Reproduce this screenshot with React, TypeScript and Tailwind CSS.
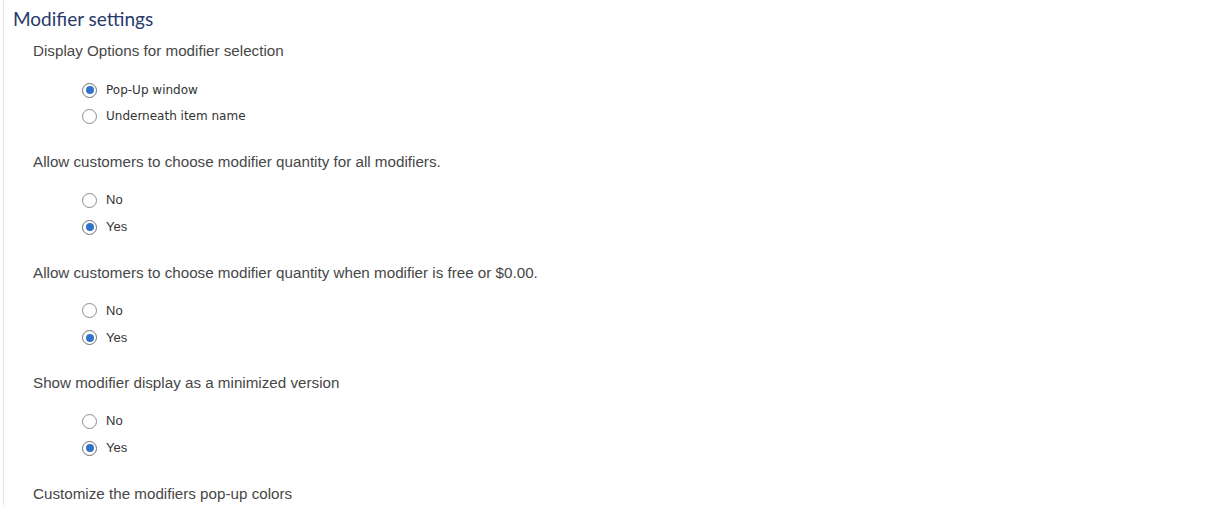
type Option = { label: string; checked: boolean };

type Setting = { title: string; options: Option[]; wide?: boolean };

const settings: Setting[] = [
  {
    title: "Display Options for modifier selection",
    wide: true,
    options: [
      { label: "Pop-Up window", checked: true },
      { label: "Underneath item name", checked: false },
    ],
  },
  {
    title: "Allow customers to choose modifier quantity for all modifiers.",
    options: [
      { label: "No", checked: false },
      { label: "Yes", checked: true },
    ],
  },
  {
    title: "Allow customers to choose modifier quantity when modifier is free or $0.00.",
    options: [
      { label: "No", checked: false },
      { label: "Yes", checked: true },
    ],
  },
  {
    title: "Show modifier display as a minimized version",
    options: [
      { label: "No", checked: false },
      { label: "Yes", checked: true },
    ],
  },
];

function Radio({ checked }: { checked: boolean }) {
  return (
    <span
      className={
        checked
          ? "w-[15px] h-[15px] rounded-full border border-[#6f6f6f] bg-white flex items-center justify-center shrink-0"
          : "w-[15px] h-[15px] rounded-full border border-[#8c8c8c] bg-white flex items-center justify-center shrink-0"
      }
    >
      {checked && <span className="w-[8px] h-[8px] rounded-full bg-[#2f74c9]" />}
    </span>
  );
}

export default function App() {
  return (
    <div className="w-[1227px] h-[505px] bg-white overflow-hidden">
      <div className="ml-[3px] h-full border-l border-[#e4e4e4] pl-[9px] pt-[7px]">
        <h1 className="text-[19px] leading-[24px] text-[#28396b] font-['Lato',sans-serif]">
          Modifier settings
        </h1>
        <div className="pl-[20px] font-['Liberation_Sans',Arial,sans-serif]">
          {settings.map((s, i) => (
            <div key={s.title} className={i === 0 ? "pt-[10px] pb-[18px]" : "pt-[10px] pb-[17.5px]"}>
              <p className="text-[15.2px] leading-[20px] text-[#474747]">{s.title}</p>
              <div
                className={
                  s.wide
                    ? "pl-[49px] pt-[21px] flex flex-col gap-[10px]"
                    : "pl-[49px] pt-[20px] flex flex-col gap-[11px]"
                }
              >
                {s.options.map((o) => (
                  <label key={o.label} className="flex items-center gap-[9px] h-[16px]">
                    <Radio checked={o.checked} />
                    <span
                      className={
                        s.wide
                          ? "text-[12px] text-[#333] font-['DejaVu_Sans',sans-serif]"
                          : "text-[13px] text-[#333]"
                      }
                    >
                      {o.label}
                    </span>
                  </label>
                ))}
              </div>
            </div>
          ))}
          <p className="pt-[10px] text-[15.2px] leading-[20px] text-[#474747]">
            Customize the modifiers pop-up colors
          </p>
        </div>
      </div>
    </div>
  );
}
